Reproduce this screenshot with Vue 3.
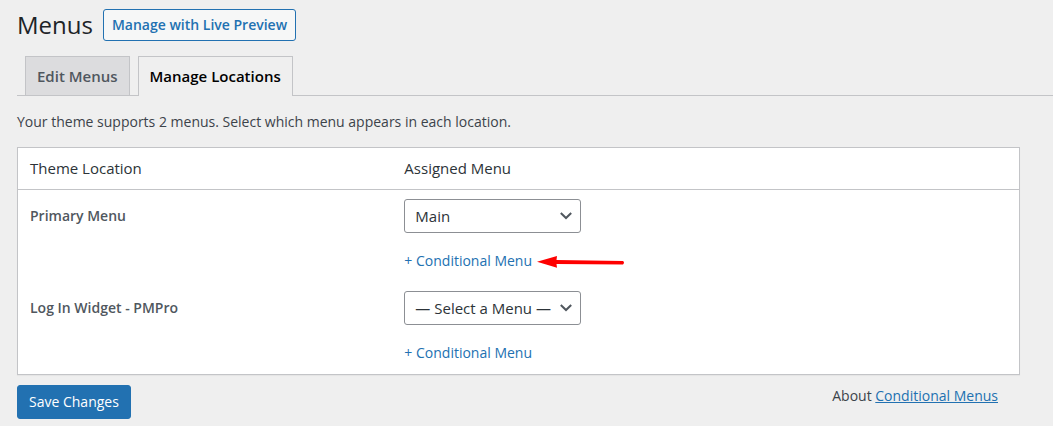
<template>
  <div class="wrap">
    <header class="page-header">
      <h1>Menus</h1>
      <a href="#" class="page-title-action">Manage with Live Preview</a>
    </header>

    <nav class="nav-tabs">
      <a
        v-for="tab in tabs"
        :key="tab"
        href="#"
        class="nav-tab"
        :class="{ 'nav-tab-active': tab === activeTab }"
        @click.prevent="activeTab = tab"
      >{{ tab }}</a>
    </nav>

    <form class="locations-form" @submit.prevent>
      <p class="intro">Your theme supports {{ locations.length }} menus. Select which menu appears in each location.</p>

      <table class="locations">
        <thead>
          <tr>
            <th scope="col" class="col-location">Theme Location</th>
            <th scope="col">Assigned Menu</th>
          </tr>
        </thead>
        <tbody>
          <tr v-for="location in locations" :key="location.id">
            <td class="location-title">
              <label :for="location.id">{{ location.name }}</label>
            </td>
            <td>
              <div class="select-box">
                <select :id="location.id" v-model="location.menu">
                  <option value="">— Select a Menu —</option>
                  <option value="main">Main</option>
                </select>
                <svg class="chevron" viewBox="0 0 12 8" aria-hidden="true">
                  <path d="M0.8 1 L6 6 L11.2 1" />
                </svg>
              </div>
              <div class="add-row">
                <a href="#" class="add-condition">+ Conditional Menu</a>
                <svg v-if="location.highlighted" class="arrow" viewBox="0 0 88 14" aria-hidden="true">
                  <path d="M0 7.8 L20 2 L19.5 5.9 L86 7 Q88 8.7 86 10.5 L19.5 9.9 L20 13.8 Z" />
                </svg>
              </div>
            </td>
          </tr>
        </tbody>
      </table>

      <div class="actions">
        <button type="submit" class="save">Save Changes</button>
        <p class="about">About <a href="#">Conditional Menus</a></p>
      </div>
    </form>
  </div>
</template>

<script setup>
import { ref } from 'vue';

const tabs = ['Edit Menus', 'Manage Locations'];
const activeTab = ref('Manage Locations');

const locations = ref([
  { id: 'location-primary', name: 'Primary Menu', menu: 'main', highlighted: true },
  { id: 'location-login', name: 'Log In Widget - PMPro', menu: '', highlighted: false },
]);
</script>

<style>
body {
  background: #efefef;
}
</style>

<style scoped>
.wrap {
  padding: 8px 0 8px 17px;
  font-family: "Segoe UI", "Open Sans", "Noto Sans", sans-serif;
  font-size: 14px;
  line-height: 20px;
  color: #3c434a;
}

a {
  color: #2271b1;
}

.page-header {
  display: flex;
  align-items: center;
  gap: 10px;
}

h1 {
  margin: 0;
  font-size: 24px;
  font-weight: 400;
  line-height: 34px;
  color: #1d2327;
}

.page-title-action {
  padding: 5px 8px;
  border: 1px solid #2271b1;
  border-radius: 3px;
  background: #f6f7f7;
  font-weight: 600;
  text-decoration: none;
}

.nav-tabs {
  display: flex;
  gap: 8px;
  margin-top: 14px;
  padding-left: 8px;
  border-bottom: 1px solid #c3c4c7;
}

.nav-tab {
  padding: 9px 11px;
  border: 1px solid #c3c4c7;
  border-bottom: none;
  background: #dcdcde;
  font-size: 15px;
  font-weight: 600;
  line-height: 20px;
  color: #50575e;
  text-decoration: none;
}

.nav-tab-active {
  margin-bottom: -1px;
  padding-bottom: 10px;
  background: #efefef;
  color: #000;
}

.locations-form {
  margin-right: 33px;
}

.intro {
  margin: 16px 0 15px;
}

.locations {
  width: 100%;
  border: 1px solid #c3c4c7;
  border-spacing: 0;
  background: #fff;
  box-shadow: 0 1px 1px rgba(0, 0, 0, 0.04);
  table-layout: fixed;
}

th {
  padding: 10px 12px;
  border-bottom: 1px solid #c3c4c7;
  font-size: 15px;
  font-weight: 400;
  line-height: 21px;
  text-align: left;
  color: #2c3338;
}

.col-location {
  width: 35%;
}

td {
  padding: 9px 12px 11px;
  vertical-align: top;
}

.location-title {
  padding-top: 16px;
  font-weight: 600;
  color: #50575e;
}

.select-box {
  position: relative;
  width: fit-content;
}

select {
  display: block;
  width: 177px;
  height: 34px;
  padding: 0 24px 0 10px;
  border: 1px solid #8c8f94;
  border-radius: 3px;
  background: #fff;
  color: #2c3338;
  font-family: inherit;
  font-size: 15px;
  appearance: none;
}

.chevron {
  position: absolute;
  top: 13px;
  right: 9px;
  width: 12px;
  height: 8px;
  fill: none;
  stroke: #50575e;
  stroke-width: 2;
  pointer-events: none;
}

.add-row {
  display: flex;
  align-items: center;
  gap: 5px;
  margin-top: 18px;
}

.add-condition {
  text-decoration: none;
}

.arrow {
  width: 88px;
  height: 14px;
  fill: #fe0000;
}

.actions {
  display: flex;
  justify-content: space-between;
  align-items: flex-start;
  margin-top: 10px;
}

.save {
  padding: 6px 11px;
  border: 1px solid #2271b1;
  border-radius: 3px;
  background: #2271b1;
  color: #fff;
  font-family: inherit;
  font-size: 14px;
  line-height: 20px;
}

.about {
  margin: 0 22px 0 0;
  line-height: 22px;
}
</style>
